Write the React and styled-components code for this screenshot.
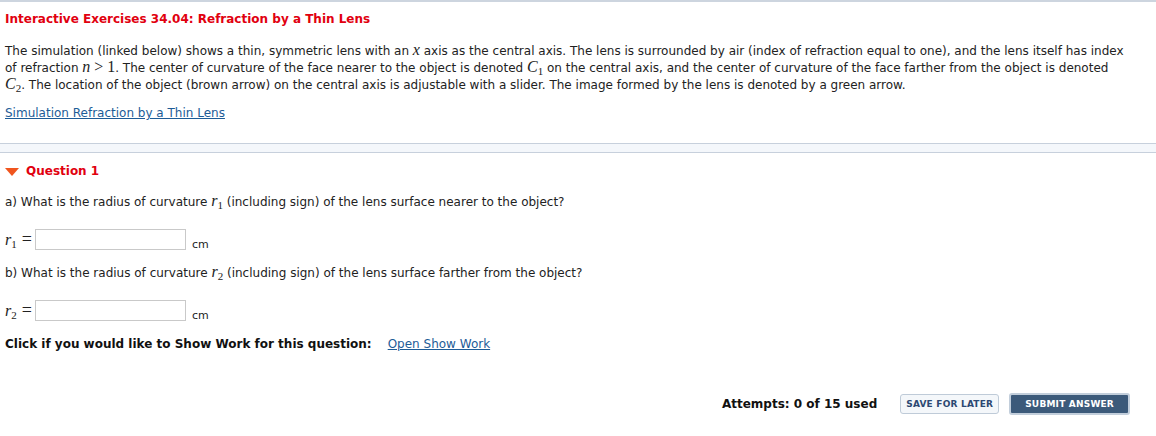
import React from 'react';
import styled, { createGlobalStyle } from 'styled-components';

const GlobalStyle = createGlobalStyle`
  html, body {
    margin: 0;
    padding: 0;
    background: #ffffff;
  }
  body {
    font-family: "DejaVu Sans", Verdana, sans-serif;
    font-size: 12px;
    color: #222;
  }
`;

const Page = styled.div`
  width: 1156px;
  height: 436px;
  border-top: 2px solid #cdd5df;
  box-sizing: border-box;
  overflow: hidden;
`;

const Intro = styled.div`
  padding: 9px 5px 0 5px;
`;

const Title = styled.h1`
  margin: 0;
  font-size: 12px;
  font-weight: bold;
  color: #e1000f;
  line-height: 16px;
`;

const Para = styled.p`
  margin: 16px 0 0 0;
  line-height: 17px;
`;

const LinkLine = styled.p`
  margin: 11px 0 0 0;
  line-height: 17px;
`;

const Link = styled.a`
  color: #1d5c97;
  text-decoration: underline;
  cursor: pointer;
`;

const Math = styled.span`
  font-family: "Liberation Serif", "Times New Roman", serif;
  font-style: ${(p) => (p.upright ? 'normal' : 'italic')};
  font-size: 16px;
  line-height: 0;
`;

const Sub = styled.sub`
  font-family: "Liberation Serif", serif;
  font-style: normal;
  font-size: 11px;
  line-height: 0;
  vertical-align: -3px;
`;

const Separator = styled.div`
  margin-top: 21px;
  height: 8px;
  background: #f4f7fb;
  border-top: 1px solid #c7d0dc;
  border-bottom: 1px solid #c7d0dc;
`;

const Question = styled.div`
  padding: 9px 5px 0 5px;
`;

const QHeader = styled.div`
  display: flex;
  align-items: center;
  gap: 7px;
  line-height: 18px;
  font-weight: bold;
  color: #e1000f;
`;

const Triangle = styled.span`
  width: 0;
  height: 0;
  border-left: 7px solid transparent;
  border-right: 7px solid transparent;
  border-top: 8px solid #f0551e;
  margin-top: 1px;
`;

const Prompt = styled.p`
  margin: ${(p) => p.top}px 0 0 0;
  line-height: 17px;
`;

const AnswerRow = styled.div`
  display: flex;
  align-items: center;
  margin-top: ${(p) => p.top}px;
  height: 21px;
`;

const Label = styled.span`
  font-family: "Liberation Serif", serif;
  font-style: italic;
  font-size: 16px;
  width: 30px;
  white-space: nowrap;
`;

const Eq = styled.span`
  font-family: "Liberation Serif", serif;
  font-style: normal;
  font-size: 18px;
  margin-left: 5px;
`;

const Field = styled.input`
  width: 151px;
  height: 21px;
  box-sizing: border-box;
  border: 1px solid #c9c9c9;
  margin: 0;
  padding: 0 3px;
  font-family: inherit;
`;

const Unit = styled.span`
  margin-left: 6px;
  font-size: 11px;
  margin-top: 9px;
`;

const ShowWork = styled.div`
  margin-top: 15px;
  line-height: 17px;
  display: flex;
  gap: 16px;
`;

const Bold = styled.span`
  font-weight: bold;
  color: #111;
`;

const Footer = styled.div`
  display: flex;
  justify-content: flex-end;
  align-items: center;
  margin-top: 40px;
  padding-right: 21px;
`;

const Attempts = styled.span`
  font-weight: bold;
  font-size: 12px;
  color: #111;
  margin-right: 23px;
`;

const Button = styled.button`
  font-family: "DejaVu Sans", Verdana, sans-serif;
  font-weight: bold;
  font-size: 9px;
  letter-spacing: 0.2px;
  text-transform: uppercase;
  border-radius: 3px;
  cursor: pointer;
  margin: 0;
  padding: 0 ${(p) => (p.primary ? 14 : 5)}px;
  height: ${(p) => (p.primary ? 22 : 20)}px;
  color: ${(p) => (p.primary ? '#ffffff' : '#2c4872')};
  background: ${(p) => (p.primary ? '#3c5a7a' : '#f4f7fa')};
  border: ${(p) => (p.primary ? '2px solid #c2cedb' : '1px solid #bfcbd8')};
  & + & {
    margin-left: 10px;
  }
`;

export default function App() {
  return (
    <Page>
      <GlobalStyle />
      <Intro>
        <Title>Interactive Exercises 34.04: Refraction by a Thin Lens</Title>
        <Para>
          The simulation (linked below) shows a thin, symmetric lens with an <Math>x</Math> axis as the central axis. The lens is surrounded by air (index of refraction equal to one), and the lens itself has index<br />
          of refraction <Math>n</Math> <Math upright>&gt; 1</Math>. The center of curvature of the face nearer to the object is denoted <Math>C</Math><Sub>1</Sub> on the central axis, and the center of curvature of the face farther from the object is denoted<br />
          <Math>C</Math><Sub>2</Sub>. The location of the object (brown arrow) on the central axis is adjustable with a slider. The image formed by the lens is denoted by a green arrow.
        </Para>
        <LinkLine>
          <Link>Simulation Refraction by a Thin Lens</Link>
        </LinkLine>
      </Intro>
      <Separator />
      <Question>
        <QHeader>
          <Triangle />
          Question 1
        </QHeader>
        <Prompt top={14}>
          a) What is the radius of curvature <Math>r</Math><Sub>1</Sub> (including sign) of the lens surface nearer to the object?
        </Prompt>
        <AnswerRow top={18}>
          <Label>r<Sub>1</Sub><Eq>=</Eq></Label>
          <Field type="text" />
          <Unit>cm</Unit>
        </AnswerRow>
        <Prompt top={15}>
          b) What is the radius of curvature <Math>r</Math><Sub>2</Sub> (including sign) of the lens surface farther from the object?
        </Prompt>
        <AnswerRow top={18}>
          <Label>r<Sub>2</Sub><Eq>=</Eq></Label>
          <Field type="text" />
          <Unit>cm</Unit>
        </AnswerRow>
        <ShowWork>
          <Bold>Click if you would like to Show Work for this question:</Bold>
          <Link>Open Show Work</Link>
        </ShowWork>
        <Footer>
          <Attempts>Attempts: 0 of 15 used</Attempts>
          <Button>Save for Later</Button>
          <Button primary>Submit Answer</Button>
        </Footer>
      </Question>
    </Page>
  );
}
